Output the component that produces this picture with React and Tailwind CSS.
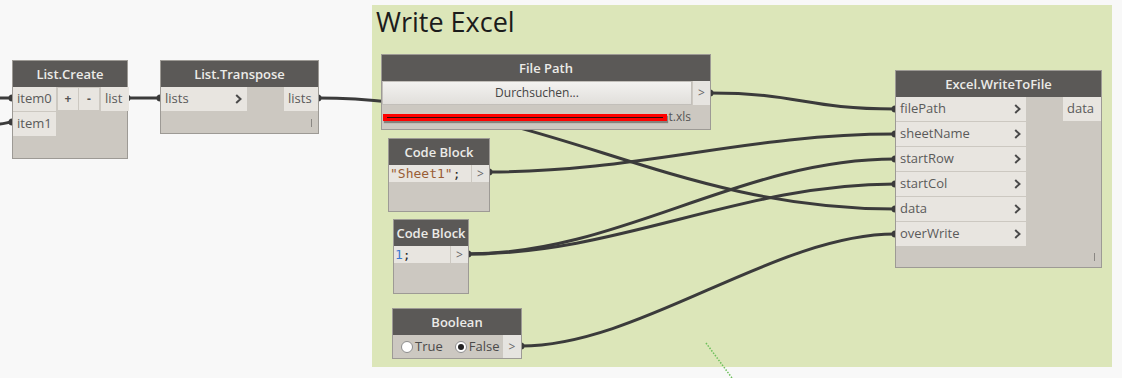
import React from 'react';

const WIRES = [
    'M0,98 L12,98',
    'M0,124 C5,124 8,122 12,122',
    'M127,98 L160,98',
    'M318,98 C541,98 667,209 895,209',
    'M710,93 C800,93 805,109 895,109',
    'M489,172 C640,172 745,134 895,134',
    'M468,254 C620,254 740,159 895,159',
    'M468,254 C620,254 740,184 895,184',
    'M521,346 C640,346 775,234 895,234',
];

const DOTS = [
    [12, 98], [12, 122], [127, 98], [160, 98], [318, 98], [710, 93], [489, 172], [468, 254], [521, 346],
    [895, 109], [895, 134], [895, 159], [895, 184], [895, 209], [895, 234],
];

function Chevron() {
    return (
        <svg width="7" height="10" viewBox="0 0 7 10" className="shrink-0">
            <path d="M1.2 1 L5.5 5 L1.2 9" fill="none" stroke="#4a4a4a" strokeWidth="2" />
        </svg>
    );
}

function Header({ children }) {
    return (
        <div className="h-[26px] bg-[#5b5957] text-[#ecebe8] text-[13px] font-semibold flex items-center justify-center leading-none">
            {children}
        </div>
    );
}

function Port({ label, chevron, className = '' }) {
    return (
        <div className={`h-[24px] bg-[#e8e5e0] text-[13px] text-[#5a5a5a] flex items-center justify-between pl-[4px] pr-[5px] ${className}`}>
            <span>{label}</span>
            {chevron && <Chevron />}
        </div>
    );
}

function Lacing() {
    return <div className="absolute right-[6px] bottom-[6px] w-px h-[8px] bg-[#8a8783]" />;
}

function Radio({ checked }) {
    return (
        <span className="w-[12px] h-[12px] rounded-full bg-white border border-[#8d8d8d] flex items-center justify-center">
            {checked && <span className="w-[6px] h-[6px] rounded-full bg-[#222]" />}
        </span>
    );
}

export default function App() {
    return (
        <div className="relative w-[1122px] h-[378px] bg-[#f8f8f8] overflow-hidden font-['Open_Sans',sans-serif]">
            <div className="absolute left-[372px] top-[5px] w-[740px] h-[362px] bg-[#dce6b9]" />
            <div className="absolute left-[376px] top-[3px] text-[27px] text-[#1b1b1b] leading-[38px]">Write Excel</div>

            <svg className="absolute inset-0" width="1122" height="378">
                {WIRES.map((d, i) => (
                    <path key={i} d={d} fill="none" stroke="#3b3b3b" strokeWidth="3" />
                ))}
                {DOTS.map(([x, y], i) => (
                    <circle key={i} cx={x} cy={y} r="3.5" fill="#3b3b3b" />
                ))}
                <path d="M706,343 L732,378" stroke="#6cbf5a" strokeWidth="1.5" strokeDasharray="1.5 1.5" />
            </svg>

            {/* List.Create */}
            <div className="absolute left-[12px] top-[60px] w-[116px] h-[99px] bg-[#ccc8c1] border border-[#9d9a95]">
                <Header>List.Create</Header>
                <div className="flex gap-[2px]">
                    <div className="flex flex-col gap-px w-[43px]">
                        <Port label="item0" />
                        <Port label="item1" />
                    </div>
                    <div className="flex gap-px h-[22px] mt-px">
                        <div className="w-[20px] bg-[#e8e5e0] text-[12px] font-bold text-[#555] flex items-center justify-center">+</div>
                        <div className="w-[20px] bg-[#e8e5e0] text-[12px] font-bold text-[#555] flex items-center justify-center">-</div>
                    </div>
                    <div className="ml-auto">
                        <Port label="list" className="w-[28px]" />
                    </div>
                </div>
            </div>

            {/* List.Transpose */}
            <div className="absolute left-[160px] top-[60px] w-[159px] h-[74px] bg-[#ccc8c1] border border-[#9d9a95]">
                <Header>List.Transpose</Header>
                <div className="flex justify-between">
                    <Port label="lists" chevron className="w-[86px]" />
                    <Port label="lists" className="w-[34px]" />
                </div>
                <Lacing />
            </div>

            {/* File Path */}
            <div className="absolute left-[381px] top-[54px] w-[330px] h-[76px] bg-[#ccc8c1] border border-[#9d9a95]">
                <Header>File Path</Header>
                <div className="flex gap-px h-[24px]">
                    <div className="flex-1 bg-gradient-to-b from-[#f3f2f0] to-[#e1dfdb] border border-[#c2bfba] text-[12px] text-[#444] flex items-center justify-center">
                        Durchsuchen...
                    </div>
                    <div className="w-[17px] bg-[#e6e4e0] text-[12px] text-[#666] flex items-center justify-center">&gt;</div>
                </div>
                <div className="relative h-[23px] flex items-center justify-end pr-[19px] text-[12px] text-[#555]">
                    <span>t.xls</span>
                    <div className="absolute left-px top-[9px] w-[284px] h-[7px] bg-[#ff0000] shadow-[1px_2px_1px_rgba(0,0,0,0.35)] flex items-center">
                        <div className="ml-[4px] w-[276px] h-px bg-[#2a1010]" />
                    </div>
                </div>
            </div>

            {/* Code Block 1 */}
            <div className="absolute left-[388px] top-[138px] w-[102px] h-[74px] bg-[#ccc8c1] border border-[#9d9a95]">
                <Header>Code Block</Header>
                <div className="flex gap-px h-[17px]">
                    <div className="flex-1 bg-[#e8e5e0] font-['DejaVu_Sans_Mono',monospace] text-[13px] leading-[17px] pl-px text-[#2b2b2b]">
                        <span className="text-[#9a5d36]">"Sheet1"</span>;
                    </div>
                    <div className="w-[17px] bg-[#e6e4e0] text-[12px] text-[#666] flex items-center justify-center">&gt;</div>
                </div>
            </div>

            {/* Code Block 2 */}
            <div className="absolute left-[393px] top-[219px] w-[76px] h-[75px] bg-[#ccc8c1] border border-[#9d9a95]">
                <Header>Code Block</Header>
                <div className="flex gap-px h-[17px]">
                    <div className="flex-1 bg-[#e8e5e0] font-['DejaVu_Sans_Mono',monospace] text-[13px] leading-[17px] pl-px text-[#2b2b2b]">
                        <span className="text-[#3b7ad0]">1</span>;
                    </div>
                    <div className="w-[17px] bg-[#e6e4e0] text-[12px] text-[#666] flex items-center justify-center">&gt;</div>
                </div>
            </div>

            {/* Boolean */}
            <div className="absolute left-[392px] top-[308px] w-[130px] h-[51px] bg-[#ccc8c1] border border-[#9d9a95]">
                <Header>Boolean</Header>
                <div className="flex h-[23px]">
                    <div className="flex-1 flex items-center gap-[1px] pl-[8px] text-[13px] text-[#4a4a4a]">
                        <Radio />
                        <span className="ml-px">True</span>
                        <span className="ml-[11px]"><Radio checked /></span>
                        <span className="ml-px">False</span>
                    </div>
                    <div className="w-[18px] bg-[#e6e4e0] text-[12px] text-[#666] flex items-center justify-center">&gt;</div>
                </div>
            </div>

            {/* Excel.WriteToFile */}
            <div className="absolute left-[895px] top-[70px] w-[207px] h-[198px] bg-[#ccc8c1] border border-[#9d9a95]">
                <Header>Excel.WriteToFile</Header>
                <div className="flex justify-between">
                    <div className="flex flex-col gap-px w-[130px]">
                        {['filePath', 'sheetName', 'startRow', 'startCol', 'data', 'overWrite'].map((p) => (
                            <Port key={p} label={p} chevron />
                        ))}
                    </div>
                    <div>
                        <Port label="data" className="w-[38px]" />
                    </div>
                </div>
                <Lacing />
            </div>
        </div>
    );
}
